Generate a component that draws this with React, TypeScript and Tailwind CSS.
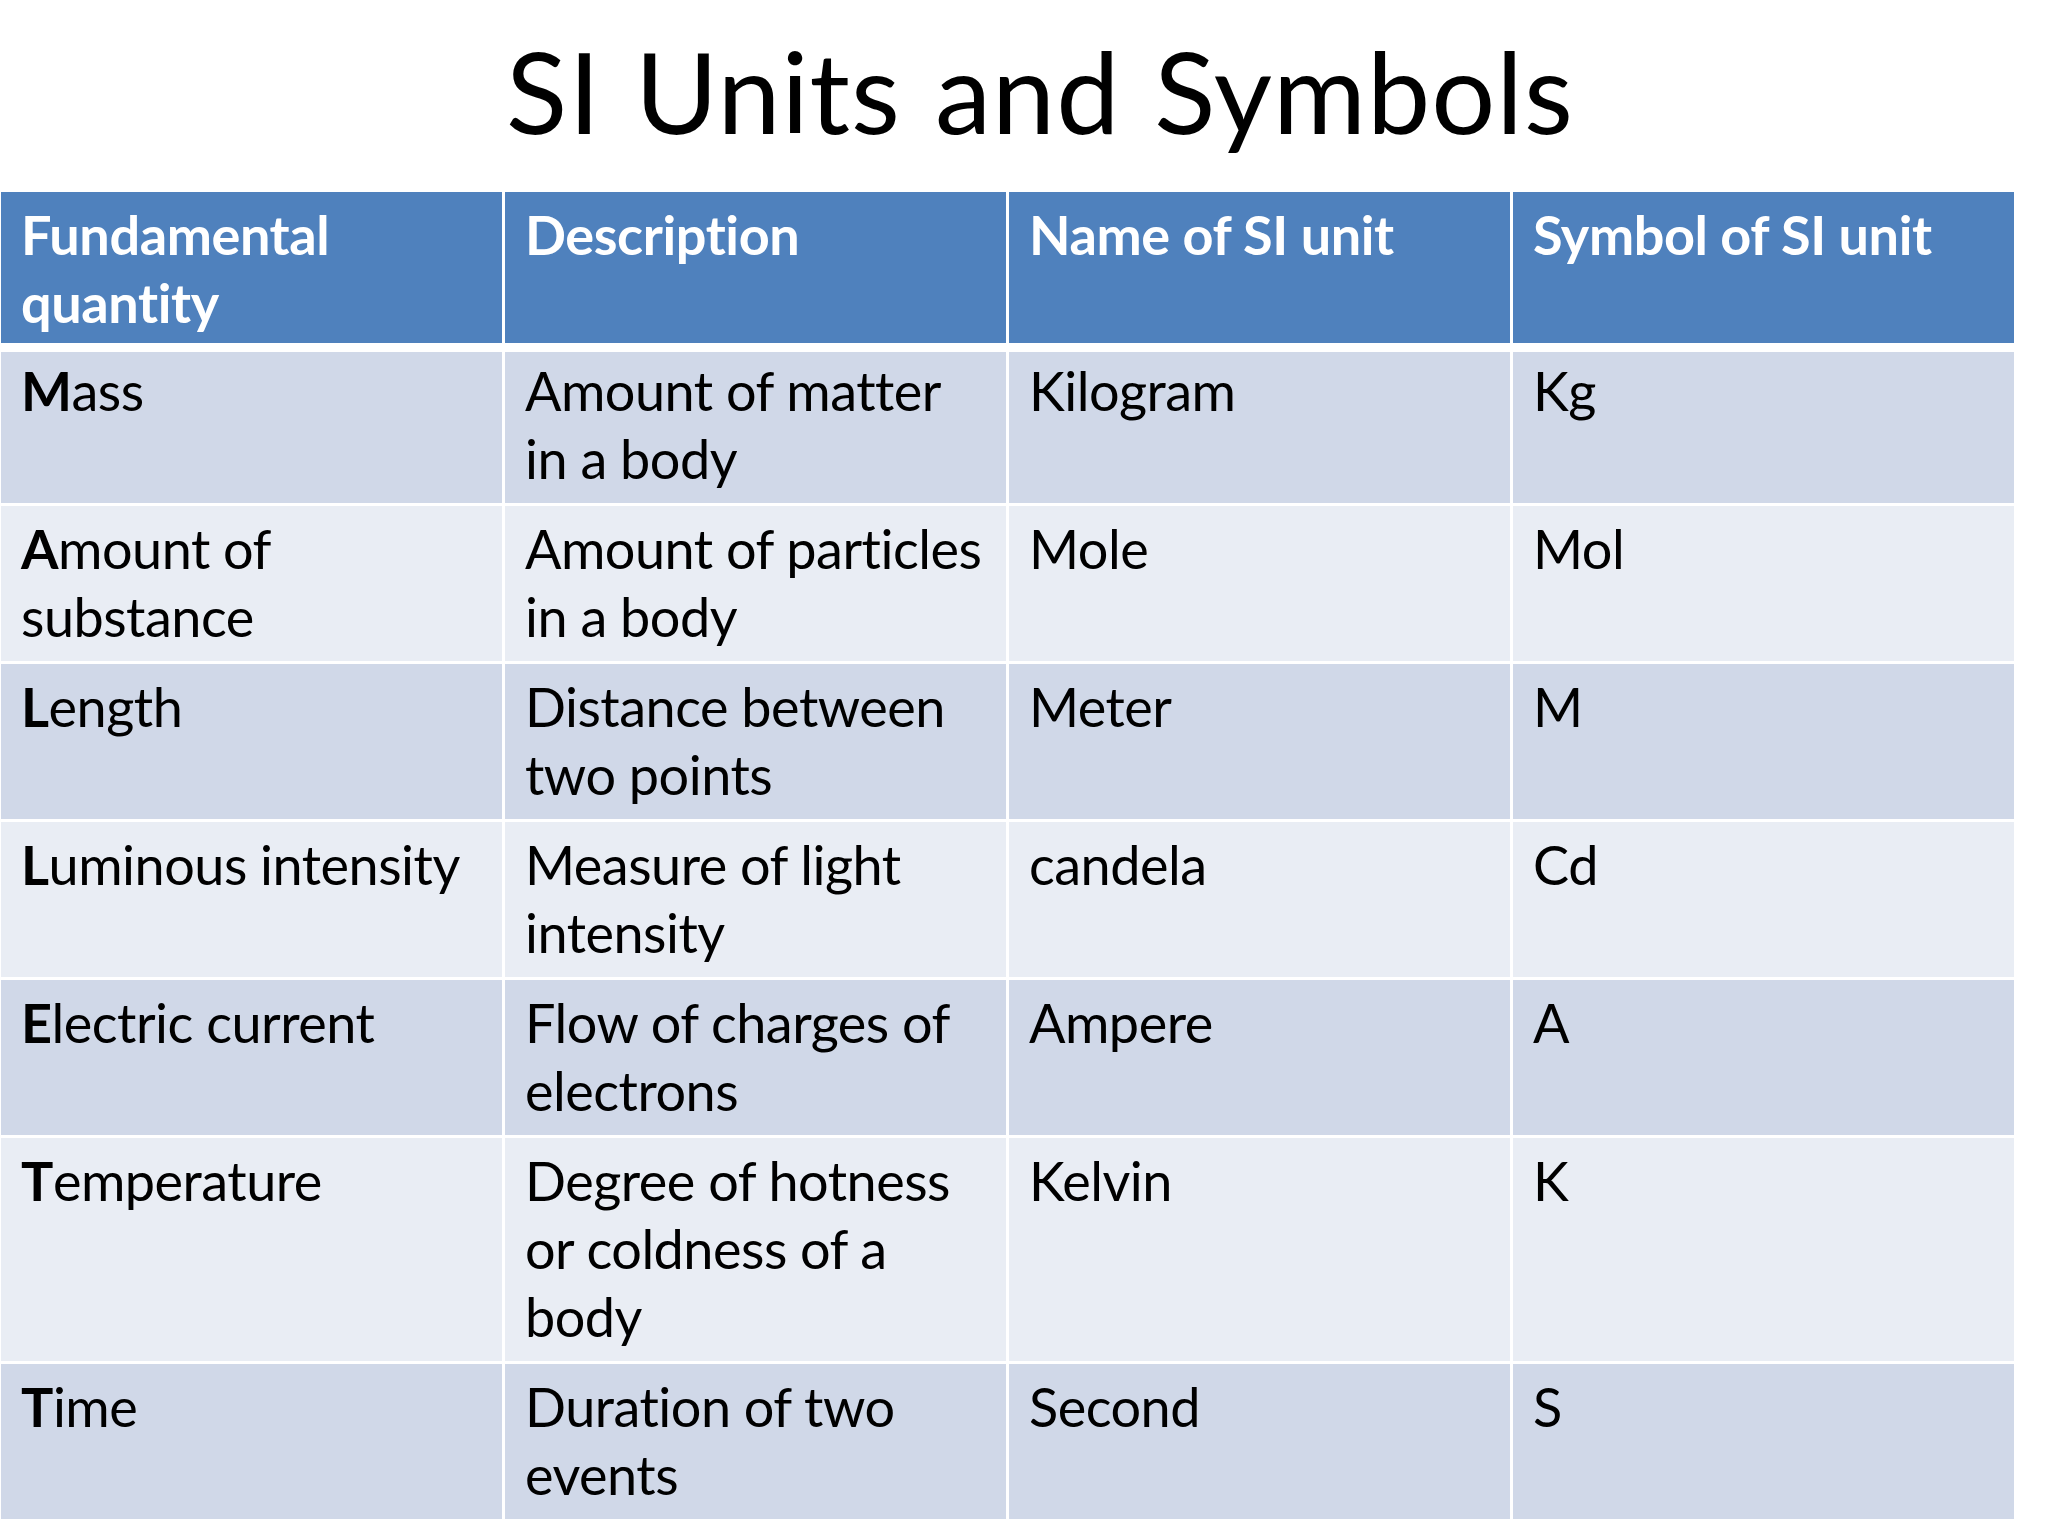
import React from "react";

type Row = { first: string[]; desc: string[]; name: string; sym: string };

const rows: Row[] = [
  { first: ["Mass"], desc: ["Amount of matter", "in a body"], name: "Kilogram", sym: "Kg" },
  { first: ["Amount of", "substance"], desc: ["Amount of particles", "in a body"], name: "Mole", sym: "Mol" },
  { first: ["Length"], desc: ["Distance between", "two points"], name: "Meter", sym: "M" },
  { first: ["Luminous intensity"], desc: ["Measure of light", "intensity"], name: "candela", sym: "Cd" },
  { first: ["Electric current"], desc: ["Flow of charges of", "electrons"], name: "Ampere", sym: "A" },
  { first: ["Temperature"], desc: ["Degree of hotness", "or coldness of a", "body"], name: "Kelvin", sym: "K" },
  { first: ["Time"], desc: ["Duration of two", "events"], name: "Second", sym: "S" },
];

function Lines({ lines, boldFirst }: { lines: string[]; boldFirst?: boolean }) {
  return (
    <>
      {lines.map((l, i) => (
        <div key={i} className="whitespace-nowrap">
          {boldFirst && i === 0 ? (
            <>
              <span className="font-bold">{l.charAt(0)}</span>
              {l.slice(1)}
            </>
          ) : (
            l
          )}
        </div>
      ))}
    </>
  );
}

export default function App() {
  return (
    <div
      className="w-[2048px] h-[1536px] bg-white overflow-hidden"
      style={{ fontFamily: "Lato, 'Open Sans', sans-serif" }}
    >
      <div className="h-[192px] pl-[32px] flex items-start justify-center">
        <div className="text-[113px] leading-[113px] pt-[34px] tracking-[1px] [word-spacing:4px] text-black whitespace-nowrap">
          SI Units and Symbols
        </div>
      </div>
      <div className="ml-[1px] w-[2013px] flex flex-col">
        <div className="grid grid-cols-[501px_501px_501px_501px] gap-x-[3px] mb-[9px]">
          {["Fundamental|quantity", "Description", "Name of SI unit", "Symbol of SI unit"].map((h, i) => (
            <div
              key={i}
              className="bg-[#4f81bd] h-[151px] pl-[20px] pt-[9px] text-white font-bold text-[54px] leading-[68px] tracking-[-0.4px]"
            >
              <Lines lines={h.split("|")} />
            </div>
          ))}
        </div>
        <div className="flex flex-col gap-y-[3px]">
          {rows.map((r, idx) => (
            <div
              key={idx}
              className="grid grid-cols-[501px_501px_501px_501px] gap-x-[3px] text-black text-[54px] leading-[68px] tracking-[-0.5px]"
            >
              {[
                <Lines key="a" lines={r.first} boldFirst />,
                <Lines key="b" lines={r.desc} />,
                <Lines key="c" lines={[r.name]} />,
                <Lines key="d" lines={[r.sym]} />,
              ].map((c, i) => (
                <div
                  key={i}
                  className={`${idx % 2 === 0 ? "bg-[#d0d8e8]" : "bg-[#e9edf4]"} ${idx === 0 ? "pt-[5px] pb-[10px]" : "pt-[9px] pb-[10px]"} pl-[20px]`}
                >
                  {c}
                </div>
              ))}
            </div>
          ))}
        </div>
      </div>
    </div>
  );
}
